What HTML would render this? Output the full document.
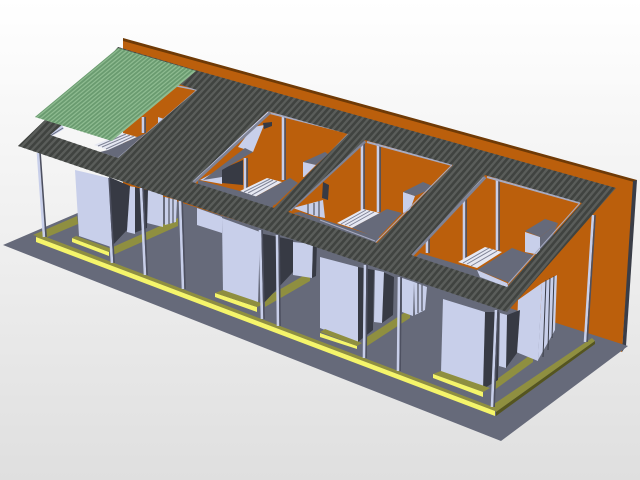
<!DOCTYPE html>
<html>
<head>
<meta charset="utf-8">
<style>
html,body{margin:0;padding:0;width:640px;height:480px;overflow:hidden;background:#fff}
svg{display:block}
</style>
</head>
<body>
<svg xmlns="http://www.w3.org/2000/svg" width="640" height="480" viewBox="0 0 640 480">
<defs>
<linearGradient id="bg" x1="0" y1="0" x2="0" y2="1"><stop offset="0" stop-color="#ffffff"/><stop offset="1" stop-color="#dfdfdf"/></linearGradient>
<clipPath id="rc"><path clip-rule="evenodd" d="M18,146 L105,62 L118,47 L195,70 L616,188 L507,312 Z M50,135 L118,158 L197,90 L130,68 Z M268,111 L348,134 L274,208 L192,182 Z M365,140 L453,165 L377,243 L288,212 Z M485,175 L582,203 L507,287 L411,255 Z"/></clipPath>
<clipPath id="gc"><path d="M35,117 L118,48 L196,71 L112,141 Z"/></clipPath>
</defs>
<rect width="640" height="480" fill="url(#bg)"/>
<!-- wall -->
<polygon points="123,40 634,181 622,352 123,184" fill="#bb5f0c"/>
<polygon points="123,38 637,180 634,182 123,41" fill="#6f3a06"/>
<polygon points="633,181 637,180 626,346 622,352" fill="#3a3d47"/>
<!-- floor -->
<polygon points="3,245 136,188 628,346 501,441" fill="#666a7a"/>
<!-- olive back strips -->
<polygon points="33,235 77,216 78,224 45,238" fill="#8f8f40"/>
<polygon points="113,247 178,218 178,226 113,255" fill="#8f8f40"/>
<polygon points="265,298 310,272 310,281 265,307" fill="#8f8f40"/>
<polygon points="367,337 410,309 410,318 367,346" fill="#8f8f40"/>
<polygon points="493,382 533,353 533,362 493,391" fill="#8f8f40"/>
<!-- Block A group -->
<polygon points="165,197 177,200 176,222 165,225" fill="#c8cfea"/>
<path d="M169,198V224M173,199V223" stroke="#3a3d47" stroke-width="1"/>
<polygon points="147,190 163,193 163,227 147,223" fill="#c8cfea"/>
<polygon points="134,187 148,190 147,228 134,233" fill="#373a44"/>
<polygon points="128,186 135,187 135,234 127,232" fill="#c8cfea"/>
<polygon points="109,177 130,186 127,230 112,246" fill="#373a44"/>
<polygon points="75,170 109,178 111,247 79,236" fill="#c8cfea"/>
<!-- Block B group -->
<polygon points="197,208 222,217 222,233 197,225" fill="#c8cfea"/>
<polygon points="293,242 313,244 312,278 293,275" fill="#c8cfea"/>
<polygon points="313,243 317,243 316,276 312,278" fill="#373a44"/>
<polygon points="259,233 293,240 293,272 262,305" fill="#373a44"/>
<polygon points="222,218 260,232 258,304 223,292" fill="#c8cfea"/>
<!-- Block C group -->
<polygon points="414,282 427,287 425,310 415,315" fill="#c8cfea"/>
<path d="M418,283V313M422,285V311" stroke="#3a3d47" stroke-width="1"/>
<polygon points="402,278 414,282 413,316 402,312" fill="#c8cfea"/>
<polygon points="383,272 394,277 393,315 382,323" fill="#373a44"/>
<polygon points="375,270 384,272 382,323 374,322" fill="#c8cfea"/>
<polygon points="358,267 374,270 373,330 358,342" fill="#373a44"/>
<polygon points="320,257 358,267 358,343 320,328" fill="#c8cfea"/>
<!-- Block D group -->
<polygon points="542,283 557,275 555,330 538,360" fill="#c8cfea"/>
<path d="M546,280L543,357M550,278L548,350M554,276L552,338" stroke="#3a3d47" stroke-width="1"/>
<polygon points="518,300 542,283 538,361 516,352" fill="#c8cfea"/>
<polygon points="507,315 520,310 517,353 506,368" fill="#373a44"/>
<polygon points="500,313 507,315 506,368 499,366" fill="#c8cfea"/>
<polygon points="485,312 499,312 498,380 483,389" fill="#373a44"/>
<polygon points="443,299 485,312 483,389 441,372" fill="#c8cfea"/>
<!-- inner yellow bases -->
<polygon points="72,238 109,252 109,256 72,242" fill="#f5f56a"/>
<polygon points="72,238 76,236 112,249 109,252" fill="#8f8f40"/>
<polygon points="215,293 257,307 257,312 215,297" fill="#f5f56a"/>
<polygon points="215,293 223,290 264,304 257,307" fill="#8f8f40"/>
<polygon points="320,333 357,346 357,349 320,337" fill="#f5f56a"/>
<polygon points="320,332 325,329 362,343 357,346" fill="#8f8f40"/>
<polygon points="433,374 441,371 490,388 483,392" fill="#8f8f40"/>
<polygon points="433,374 483,392 483,397 433,378" fill="#f5f56a"/>
<!-- outer base -->
<polygon points="36,237 38,234 493,407 495,411" fill="#8f8f40"/>
<polygon points="36,237 495,411 495,416 36,242" fill="#f5f56a"/>
<polygon points="491,406 592,338 595,341 496,412" fill="#8f8f40"/>
<polygon points="496,412 595,341 595,344 496,416" fill="#55551f"/>
<!-- columns -->
<g fill="none" stroke-linecap="butt">
<g stroke="#c8cfea" stroke-width="2.6">
<path d="M38,153L44,237M107,178L112,263M141,188L145,275M180,200L183,289M260,230L262,319M277,235L278,326M365,265L364,358M399,277L398,371M496,310L492,407M593,215L585,342"/>
<path d="M283,113V180M362,142V210M378,143V212M464,195V260M497,178V250M427,237V253M245,158V190M143,117V133"/>
</g>
<g stroke="#4d5060" stroke-width="1.6" transform="translate(2.1,0)">
<path d="M38,153L44,237M107,178L112,263M141,188L145,275M180,200L183,289M260,230L262,319M277,235L278,326M365,265L364,358M399,277L398,371M496,310L492,407M593,215L585,342"/>
<path d="M283,113V180M362,142V210M378,143V212M464,195V260M497,178V250M427,237V253M245,158V190M143,117V133"/>
</g>
</g>
<!-- hole 1 contents -->
<polygon points="94,145 123,133 137,137 108,150" fill="#e6e8f2"/>
<path d="M98,146L126,134M102,147L130,135M106,149L134,136" stroke="#7f8396" stroke-width="1"/>
<polygon points="100,152 108,150 137,137 146,133 118,158" fill="#666a7a"/>
<polygon points="158,117 164,119 158,126" fill="#c8cfea"/>
<path d="M118,158L197,90" stroke="#a7abc2" stroke-width="1"/>
<path d="M177,86L197,90" stroke="#a7abc2" stroke-width="1.5"/>
<path d="M50,135L63,127" stroke="#c8cfea" stroke-width="4"/>
<path d="M50,136L63,128" stroke="#666a7a" stroke-width="1"/>
<!-- hole 2 contents -->
<polygon points="222,169 243,160 243,185 222,183" fill="#373a44"/>
<polygon points="200,180 222,168 222,184" fill="#c8cfea"/>
<polygon points="238,147 253,127 264,125 253,152" fill="#c8cfea"/>
<polygon points="203,180 245,148 253,152 222,170 222,177" fill="#666a7a"/>
<polygon points="263,123 272,122 272,126 264,129" fill="#373a44"/>
<polygon points="240,191 267,178 282,182 255,197" fill="#e6e8f2"/>
<path d="M244,192L270,179M248,193L273,180M252,195L277,181" stroke="#7f8396" stroke-width="1"/>
<polygon points="255,197 290,178 298,183 275,205" fill="#666a7a"/>
<polygon points="198,180 240,191 275,203 272,208 198,186" fill="#666a7a"/>
<polygon points="303,162 325,152 328,154 316,165" fill="#666a7a"/>
<polygon points="303,162 316,165 304,177 303,177" fill="#c8cfea"/>
<polygon points="323,182 329,185 328,200 322,198" fill="#373a44"/>
<path d="M270,113L349,133" stroke="#a7abc2" stroke-width="2"/>
<path d="M349,133L276,208" stroke="#a7abc2" stroke-width="1"/>
<path d="M270,112L193,183" stroke="#7f8396" stroke-width="3.5"/>
<path d="M268,112L193,181" stroke="#c8cfea" stroke-width="1"/>
<!-- hole 3 contents -->
<polygon points="293,208 323,200 325,218 315,216" fill="#c8cfea"/>
<path d="M308,204V214M314,203V215M319,201V217" stroke="#3a3d47" stroke-width="1"/>
<polygon points="337,223 363,209 380,213 352,228" fill="#e6e8f2"/>
<path d="M341,224L366,210M345,225L370,211M349,226L374,212" stroke="#7f8396" stroke-width="1"/>
<polygon points="352,228 387,209 402,213 378,238" fill="#666a7a"/>
<polygon points="293,213 300,212 380,238 373,245" fill="#666a7a"/>
<polygon points="403,192 415,196 410,210 403,213" fill="#c8cfea"/>
<polygon points="403,192 423,182 435,187 415,196" fill="#666a7a"/>
<path d="M367,142L452,165" stroke="#a7abc2" stroke-width="2"/>
<path d="M452,165L375,243" stroke="#a7abc2" stroke-width="1"/>
<path d="M320,220L375,241" stroke="#a7abc2" stroke-width="1"/>
<path d="M365,141L290,210" stroke="#7f8396" stroke-width="3.5"/>
<path d="M363,141L288,209" stroke="#c8cfea" stroke-width="1"/>
<!-- hole 4 contents -->
<polygon points="458,262 485,247 502,252 477,268" fill="#e6e8f2"/>
<path d="M463,263L489,248M467,264L493,249M471,266L497,251" stroke="#7f8396" stroke-width="1"/>
<polygon points="415,258 420,253 477,270 507,283 507,290" fill="#666a7a"/>
<polygon points="477,270 512,248 523,252 533,255 510,283" fill="#666a7a"/>
<polygon points="477,270 507,283 509,288 480,277" fill="#c8cfea"/>
<polygon points="525,232 540,237 540,255 525,252" fill="#c8cfea"/>
<polygon points="525,231 545,219 558,223 540,237" fill="#666a7a"/>
<polygon points="540,237 558,223 550,243 540,255" fill="#666a7a"/>
<path d="M487,177L580,203" stroke="#a7abc2" stroke-width="2"/>
<path d="M580,203L507,285" stroke="#a7abc2" stroke-width="1"/>
<path d="M485,177L412,255" stroke="#7f8396" stroke-width="3.5"/>
<path d="M483,177L410,254" stroke="#c8cfea" stroke-width="1"/>
<!-- roof -->
<g clip-path="url(#rc)">
<rect width="640" height="480" fill="#5a5d5a"/>
<path fill="none" stroke="#404340" stroke-width="2.6" d="M10 155 120 40M15.2 156.7 125.3 41.5M20.4 158.5 130.5 42.9M25.5 160.2 135.8 44.4M30.7 162 141.1 45.8M35.9 163.7 146.4 47.3M41.1 165.4 151.6 48.8M46.3 167.2 156.9 50.2M51.4 168.9 162.2 51.7M56.6 170.7 167.4 53.1M61.8 172.4 172.7 54.6M67 174.1 178 56.1M72.2 175.9 183.2 57.5M77.3 177.6 188.5 59M82.5 179.4 193.8 60.4M87.7 181.1 199.1 61.9M92.9 182.8 204.3 63.4M98.1 184.6 209.6 64.8M103.2 186.3 214.9 66.3M108.4 188.1 220.1 67.7M113.6 189.8 225.4 69.2M118.8 191.5 230.7 70.7M124 193.3 235.9 72.1M129.1 195 241.2 73.6M134.3 196.8 246.5 75M139.5 198.5 251.8 76.5M144.7 200.2 257 78M149.9 202 262.3 79.4M155 203.7 267.6 80.9M160.2 205.5 272.8 82.3M165.4 207.2 278.1 83.8M170.6 208.9 283.4 85.3M175.8 210.7 288.6 86.7M180.9 212.4 293.9 88.2M186.1 214.2 299.2 89.6M191.3 215.9 304.5 91.1M196.5 217.6 309.7 92.6M201.7 219.4 315 94M206.8 221.1 320.3 95.5M212 222.9 325.5 96.9M217.2 224.6 330.8 98.4M222.4 226.3 336.1 99.9M227.6 228.1 341.3 101.3M232.7 229.8 346.6 102.8M237.9 231.6 351.9 104.2M243.1 233.3 357.2 105.7M248.3 235 362.4 107.2M253.5 236.8 367.7 108.6M258.6 238.5 373 110.1M263.8 240.3 378.2 111.5M269 242 383.5 113M274.2 243.7 388.8 114.5M279.4 245.5 394 115.9M284.5 247.2 399.3 117.4M289.7 249 404.6 118.8M294.9 250.7 409.9 120.3M300.1 252.4 415.1 121.8M305.3 254.2 420.4 123.2M310.4 255.9 425.7 124.7M315.6 257.7 430.9 126.1M320.8 259.4 436.2 127.6M326 261.1 441.5 129.1M331.2 262.9 446.7 130.5M336.3 264.6 452 132M341.5 266.4 457.3 133.4M346.7 268.1 462.6 134.9M351.9 269.8 467.8 136.4M357.1 271.6 473.1 137.8M362.2 273.3 478.4 139.3M367.4 275.1 483.6 140.7M372.6 276.8 488.9 142.2M377.8 278.5 494.2 143.7M383 280.3 499.4 145.1M388.1 282 504.7 146.6M393.3 283.8 510 148M398.5 285.5 515.3 149.5M403.7 287.2 520.5 151M408.9 289 525.8 152.4M414 290.7 531.1 153.9M419.2 292.5 536.3 155.3M424.4 294.2 541.6 156.8M429.6 295.9 546.9 158.3M434.8 297.7 552.1 159.7M439.9 299.4 557.4 161.2M445.1 301.2 562.7 162.6M450.3 302.9 568 164.1M455.5 304.6 573.2 165.6M460.7 306.4 578.5 167M465.8 308.1 583.8 168.5M471 309.9 589 169.9M476.2 311.6 594.3 171.4M481.4 313.3 599.6 172.9M486.6 315.1 604.8 174.3M491.7 316.8 610.1 175.8M496.9 318.6 615.4 177.2M502.1 320.3 620.7 178.7M507.3 322 626 180.2M512.5 323.8 631.2 181.6"/>
</g>
<!-- green sheet -->
<g clip-path="url(#gc)">
<rect width="640" height="480" fill="#8ebb90"/>
<path fill="none" stroke="#6a9b70" stroke-width="1.8" stroke-linecap="square" d="M35 117 118 48M38.5 118.1 121.6 49M42 119.2 125.1 50.1M45.5 120.3 128.7 51.2M49 121.4 132.2 52.2M52.5 122.5 135.8 53.3M56 123.5 139.3 54.3M59.5 124.6 142.9 55.4M63 125.7 146.4 56.4M66.5 126.8 150 57.5M70 127.9 153.5 58.5M73.5 129 157.1 59.6M77 130.1 160.6 60.6M80.5 131.2 164.2 61.7M84 132.3 167.7 62.7M87.5 133.4 171.3 63.8M91 134.4 174.8 64.8M94.5 135.5 178.4 65.9M98 136.6 181.9 66.9M101.5 137.7 185.5 68M105 138.8 189 69M108.5 139.9 192.6 70.1"/>
</g>
</svg>
</body>
</html>
